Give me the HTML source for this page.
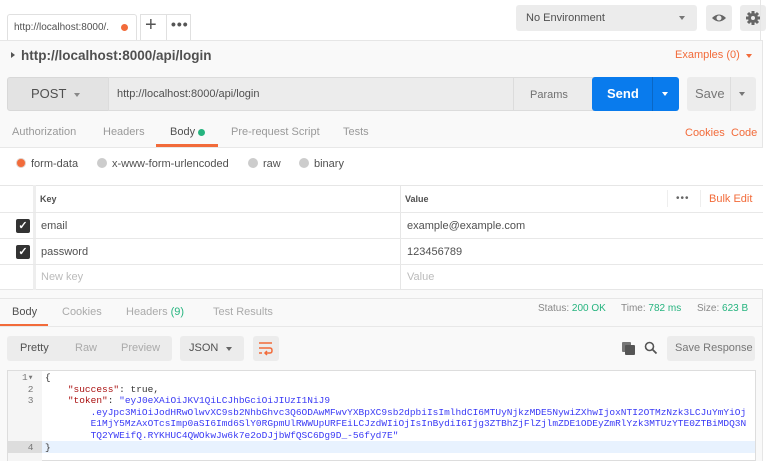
<!DOCTYPE html>
<html><head><meta charset="utf-8"><style>
*{box-sizing:border-box;margin:0;padding:0}
body{width:768px;height:461px;overflow:hidden;background:#fff;font-family:"Liberation Sans",sans-serif;font-size:11px;color:#505050;position:relative}
.a{position:absolute}
.g{background:#ececec;border-radius:3px}
.o{color:#f26b3a}
.t{color:#808080}
.mono{font-family:"Liberation Mono",monospace;font-size:9.5px;line-height:11.6px;white-space:pre}
</style></head><body>
<div class="a" style="left:7px;top:14px;width:130px;height:27px;border:1px solid #e0e0e0;border-bottom:none;background:#fff;border-radius:3px 3px 0 0"></div>
<div class="a" style="left:14px;top:22px;font-size:10px;color:#505050">http://localhost:8000/.</div>
<div class="a" style="left:121px;top:24px;width:7px;height:7px;border-radius:50%;background:#f26b3a"></div>
<div class="a" style="left:140px;top:14px;width:51px;height:27px;border:1px solid #e0e0e0;border-bottom:none;background:#fff"></div>
<div class="a" style="left:166px;top:14px;width:1px;height:26px;background:#e0e0e0"></div>
<div class="a" style="left:145px;top:14px;font-size:20px;color:#555">+</div>
<div class="a" style="left:171px;top:16px;font-size:14px;color:#555;font-weight:bold;letter-spacing:1px">•••</div>
<div class="a g" style="left:516px;top:5px;width:181px;height:26px"></div>
<div class="a" style="left:526px;top:12px;font-size:11px;color:#505050">No Environment</div>
<div class="a" style="left:679px;top:16px;border-left:3px solid transparent;border-right:3px solid transparent;border-top:4px solid #777"></div>
<div class="a g" style="left:706px;top:5px;width:26px;height:26px"></div>
<svg class="a" style="left:711px;top:11px" width="16" height="14" viewBox="0 0 16 14"><path d="M1 7Q8 0 15 7Q8 14 1 7Z" fill="#666"/><circle cx="8" cy="7" r="2.5" fill="#ececec"/></svg>
<div class="a g" style="left:740px;top:5px;width:26px;height:26px"></div>
<svg class="a" style="left:745px;top:10px" width="16" height="16" viewBox="0 0 16 16"><g stroke="#666" stroke-width="3"><path d="M8 1V15M1 8H15M3 3L13 13M13 3L3 13"/></g><circle cx="8" cy="8" r="5" fill="#666"/><circle cx="8" cy="8" r="2" fill="#ececec"/></svg>
<div class="a" style="left:760px;top:0;width:1px;height:40px;background:#e6e6e6"></div>
<div class="a" style="left:0;top:40px;width:763px;height:421px;background:#f9f9f9;border-top:1px solid #e6e6e6;border-right:1px solid #e6e6e6"></div>
<div class="a" style="left:11px;top:52px;border-top:3px solid transparent;border-bottom:3px solid transparent;border-left:4px solid #555"></div>
<div class="a" style="left:21px;top:48px;font-size:13.5px;font-weight:bold;color:#505050">http://localhost:8000/api/login</div>
<div class="a o" style="left:675px;top:49px;font-size:11px">Examples (0)</div>
<div class="a" style="left:746px;top:54px;border-left:3.5px solid transparent;border-right:3.5px solid transparent;border-top:4px solid #f26b3a"></div>
<div class="a" style="left:7px;top:77px;height:34px;background:#e3e3e3;border:1px solid #d8d8d8;border-radius:3px 0 0 3px;width:102px"></div>
<div class="a" style="left:31px;top:86px;font-size:13px;color:#505050">POST</div>
<div class="a" style="left:74px;top:93px;border-left:3px solid transparent;border-right:3px solid transparent;border-top:4px solid #888"></div>
<div class="a" style="left:108px;top:77px;width:492px;height:34px;background:#ececec;border:1px solid #dcdcdc;border-radius:0 3px 3px 0"></div>
<div class="a" style="left:513px;top:77px;width:1px;height:34px;background:#dcdcdc"></div>
<div class="a" style="left:117px;top:88px;font-size:11px;color:#505050">http://localhost:8000/api/login</div>
<div class="a" style="left:530px;top:89px;font-size:11px;color:#707070">Params</div>
<div class="a" style="left:592px;top:77px;width:87px;height:34px;background:#097bed;border-radius:3px"></div>
<div class="a" style="left:652px;top:77px;width:1px;height:34px;background:#0a67c5"></div>
<div class="a" style="left:607px;top:86px;font-size:13px;font-weight:bold;color:#fff">Send</div>
<div class="a" style="left:662px;top:92px;border-left:3px solid transparent;border-right:3px solid transparent;border-top:4px solid #fff"></div>
<div class="a g" style="left:687px;top:77px;width:69px;height:34px"></div>
<div class="a" style="left:730px;top:77px;width:1px;height:34px;background:#ddd"></div>
<div class="a" style="left:695px;top:86px;font-size:13px;color:#777">Save</div>
<div class="a" style="left:739px;top:92px;border-left:3px solid transparent;border-right:3px solid transparent;border-top:4px solid #777"></div>
<div class="a t" style="left:12px;top:126px;color:#999">Authorization</div>
<div class="a t" style="left:103px;top:126px;color:#999">Headers</div>
<div class="a" style="left:170px;top:126px;color:#505050">Body</div>
<div class="a" style="left:198px;top:129px;width:7px;height:7px;border-radius:50%;background:#26b47f"></div>
<div class="a t" style="left:231px;top:126px;color:#999">Pre-request Script</div>
<div class="a t" style="left:343px;top:126px;color:#999">Tests</div>
<div class="a o" style="left:685px;top:127px">Cookies</div>
<div class="a o" style="left:731px;top:127px">Code</div>
<div class="a" style="left:0;top:147px;width:763px;height:1px;background:#e8e8e8"></div>
<div class="a" style="left:156px;top:144px;width:62px;height:3px;background:#f26b3a"></div>
<div class="a" style="left:0;top:148px;width:763px;height:142px;background:#fff"></div>
<div class="a" style="left:16px;top:158px;width:10px;height:10px;border-radius:50%;background:#f26b3a;border:1px solid #e0d0c8"></div>
<div class="a" style="left:31px;top:158px">form-data</div>
<div class="a" style="left:97px;top:158px;width:10px;height:10px;border-radius:50%;background:#ccc"></div>
<div class="a" style="left:112px;top:158px">x-www-form-urlencoded</div>
<div class="a" style="left:248px;top:158px;width:10px;height:10px;border-radius:50%;background:#ccc"></div>
<div class="a" style="left:263px;top:158px">raw</div>
<div class="a" style="left:299px;top:158px;width:10px;height:10px;border-radius:50%;background:#ccc"></div>
<div class="a" style="left:314px;top:158px">binary</div>
<div class="a" style="left:0;top:185px;width:763px;height:105px;border-top:1px solid #e6e6e6;border-bottom:1px solid #e6e6e6"></div>
<div class="a" style="left:33px;top:185px;width:3px;height:105px;background:#eee"></div>
<div class="a" style="left:400px;top:185px;width:1px;height:105px;background:#e6e6e6"></div>
<div class="a" style="left:0;top:212px;width:763px;height:1px;background:#e8e8e8"></div>
<div class="a" style="left:0;top:238px;width:763px;height:1px;background:#e8e8e8"></div>
<div class="a" style="left:0;top:264px;width:763px;height:1px;background:#e8e8e8"></div>
<div class="a" style="left:667px;top:190px;width:1px;height:17px;background:#eee"></div>
<div class="a" style="left:700px;top:190px;width:1px;height:17px;background:#eee"></div>
<div class="a" style="left:40px;top:194px;font-size:9px;font-weight:bold;color:#505050">Key</div>
<div class="a" style="left:405px;top:194px;font-size:9px;font-weight:bold;color:#505050">Value</div>
<div class="a" style="left:676px;top:193px;font-size:10px;color:#666;letter-spacing:1px">•••</div>
<div class="a o" style="left:709px;top:193px">Bulk Edit</div>
<div class="a" style="left:16px;top:219px;width:14px;height:14px;background:#333;border-radius:2px;color:#fff;font-size:11px;line-height:14px;text-align:center;font-weight:bold">✓</div>
<div class="a" style="left:16px;top:245px;width:14px;height:14px;background:#333;border-radius:2px;color:#fff;font-size:11px;line-height:14px;text-align:center;font-weight:bold">✓</div>
<div class="a" style="left:41px;top:220px">email</div>
<div class="a" style="left:41px;top:246px">password</div>
<div class="a" style="left:41px;top:271px;color:#bbb">New key</div>
<div class="a" style="left:407px;top:220px">example@example.com</div>
<div class="a" style="left:407px;top:246px">123456789</div>
<div class="a" style="left:407px;top:271px;color:#bbb">Value</div>
<div class="a" style="left:0;top:298px;width:763px;height:1px;background:#e6e6e6"></div>
<div class="a" style="left:12px;top:306px;color:#505050">Body</div>
<div class="a" style="left:62px;top:306px;color:#aaa">Cookies</div>
<div class="a" style="left:126px;top:306px;color:#aaa">Headers <span style="color:#26b47f">(9)</span></div>
<div class="a" style="left:213px;top:306px;color:#aaa">Test Results</div>
<div class="a" style="left:538px;top:303px;font-size:10px;color:#888">Status: <span style="color:#26b47f">200 OK</span></div>
<div class="a" style="left:621px;top:303px;font-size:10px;color:#888">Time: <span style="color:#26b47f">782 ms</span></div>
<div class="a" style="left:697px;top:303px;font-size:10px;color:#888">Size: <span style="color:#26b47f">623 B</span></div>
<div class="a" style="left:0;top:326px;width:763px;height:1px;background:#e8e8e8"></div>
<div class="a" style="left:0;top:324px;width:48px;height:2px;background:#f26b3a"></div>
<div class="a g" style="left:7px;top:336px;width:165px;height:25px"></div>
<div class="a" style="left:20px;top:342px;color:#505050">Pretty</div>
<div class="a" style="left:75px;top:342px;color:#aaa">Raw</div>
<div class="a" style="left:121px;top:342px;color:#aaa">Preview</div>
<div class="a g" style="left:180px;top:336px;width:64px;height:25px"></div>
<div class="a" style="left:189px;top:342px;color:#505050">JSON</div>
<div class="a" style="left:226px;top:347px;border-left:3px solid transparent;border-right:3px solid transparent;border-top:4px solid #666"></div>
<div class="a g" style="left:253px;top:336px;width:26px;height:25px"></div>
<svg class="a" style="left:258px;top:341px" width="16" height="15" viewBox="0 0 16 15"><path d="M1 2H14M1 7H12Q14 7 14 9.5Q14 12 12 12H7M9 10L7 12L9 14M1 12H4" fill="none" stroke="#f26b3a" stroke-width="1.5"/></svg>
<div class="a" style="left:622px;top:342px;width:9px;height:10px;background:#777;border-radius:1px"></div>
<div class="a" style="left:625px;top:345px;width:10px;height:10px;background:#555;border-radius:1px"></div>
<svg class="a" style="left:644px;top:341px" width="14" height="14" viewBox="0 0 14 14"><circle cx="5.5" cy="5.5" r="4" fill="none" stroke="#555" stroke-width="1.6"/><path d="M8.5 8.5L12.5 12.5" stroke="#555" stroke-width="1.8"/></svg>
<div class="a g" style="left:667px;top:336px;width:88px;height:25px"></div>
<div class="a" style="left:675px;top:342px;color:#777">Save Response</div>
<div class="a" style="left:7px;top:370px;width:749px;height:91px;background:#fff;border:1px solid #ddd"></div>
<div class="a" style="left:8px;top:371px;width:34px;height:90px;background:#f5f5f5"></div>
<div class="a" style="left:42px;top:441px;width:713px;height:12px;background:#e8f2fe"></div>
<div class="a" style="left:8px;top:441px;width:34px;height:12px;background:#ddd"></div>
<div class="a mono" style="left:22px;top:372px;color:#777;text-align:right">1▾
2
3



4</div>
<div class="a mono" style="left:45px;top:372px;color:#333">{
    <span style="color:#a11">"success"</span>: true,
    <span style="color:#a11">"token"</span>: <span style="color:#3a3af5">"eyJ0eXAiOiJKV1QiLCJhbGciOiJIUzI1NiJ9
        .eyJpc3MiOiJodHRwOlwvXC9sb2NhbGhvc3Q6ODAwMFwvYXBpXC9sb2dpbiIsImlhdCI6MTUyNjkzMDE5NywiZXhwIjoxNTI2OTMzNzk3LCJuYmYiOj
        E1MjY5MzAxOTcsImp0aSI6Imd6SlY0RGpmUlRWWUpURFEiLCJzdWIiOjIsInBydiI6Ijg3ZTBhZjFlZjlmZDE1ODEyZmRlYzk3MTUzYTE0ZTBiMDQ3N
        TQ2YWEifQ.RYKHUC4QWOkwJw6k7e2oDJjbWfQSC6Dg9D_-56fyd7E"</span>
}</div>
</body></html>
